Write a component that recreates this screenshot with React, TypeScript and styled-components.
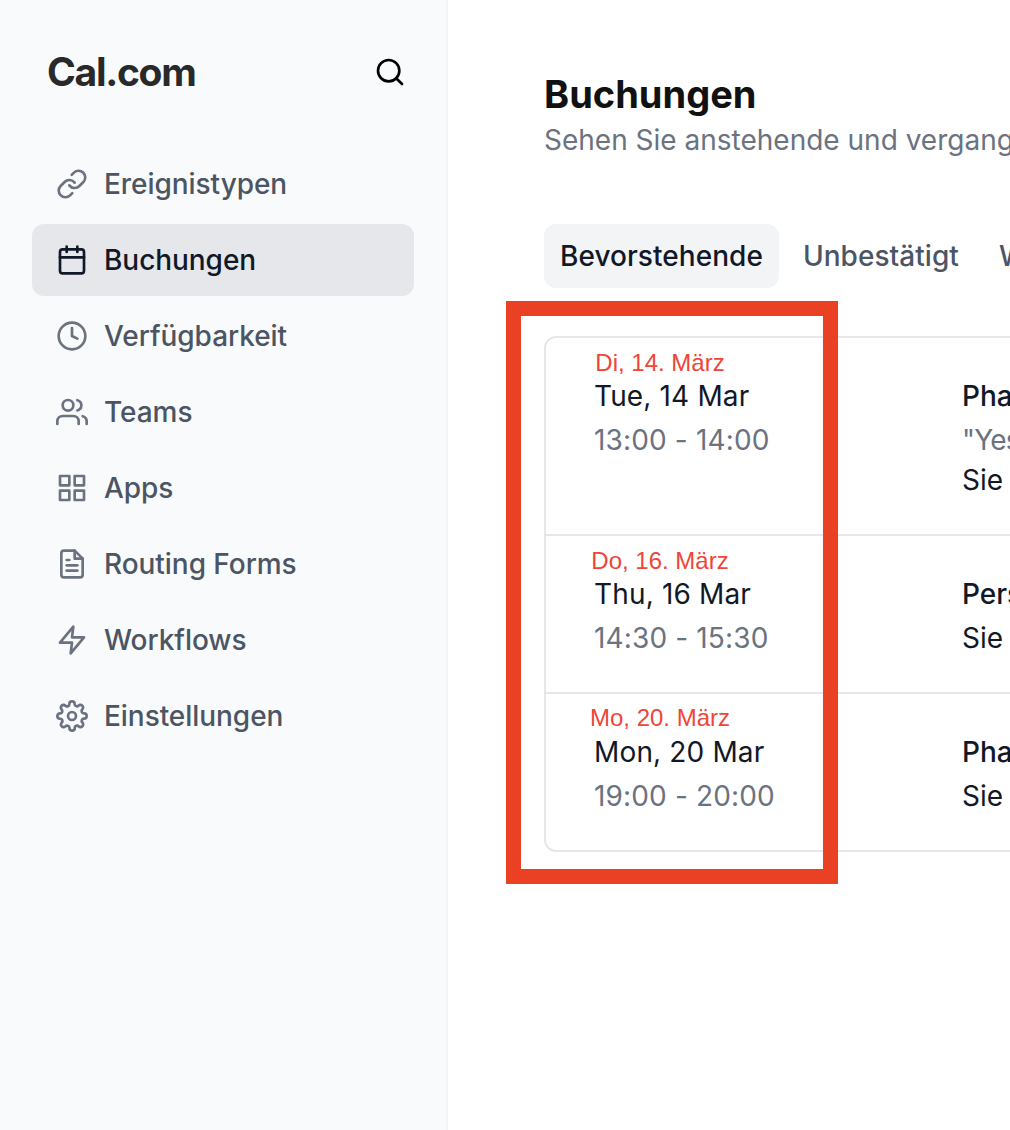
import React from "react";
import styled, { createGlobalStyle } from "styled-components";
import { FiLink, FiCalendar, FiClock, FiUsers, FiGrid, FiFileText, FiZap, FiSettings, FiSearch } from "react-icons/fi";

const Global = createGlobalStyle`
  html, body { margin: 0; padding: 0; background: #fff; }
  body { font-family: Inter, "Liberation Sans", sans-serif; overflow: hidden; }
`;

const Page = styled.div`
  display: flex;
  width: 1010px;
  height: 1130px;
  overflow: hidden;
  position: relative;
`;

const Sidebar = styled.aside`
  flex: 0 0 448px;
  box-sizing: border-box;
  height: 100%;
  background: #f9fafb;
  border-right: 2px solid #f3f4f6;
  padding: 48px 32px 0;
`;

const Brand = styled.div`
  display: flex;
  align-items: center;
  justify-content: space-between;
  height: 48px;
  padding: 0 8px 0 15px;
  margin-bottom: 52px;
  color: #000;
`;

const Logo = styled.span`
  font-size: 39px;
  line-height: 46px;
  font-weight: 700;
  letter-spacing: -1.3px;
  color: #292929;
`;

const Nav = styled.nav`
  display: flex;
  flex-direction: column;
  gap: 4px;
`;

const NavItem = styled.a<{ $active?: boolean }>`
  display: flex;
  align-items: center;
  gap: 16px;
  height: 72px;
  padding: 0 24px;
  border-radius: 12px;
  font-size: 28px;
  font-weight: 500;
  letter-spacing: -0.05px;
  color: ${(p) => (p.$active ? "#111827" : "#4b5563")};
  background: ${(p) => (p.$active ? "#e5e7eb" : "transparent")};
  svg { color: ${(p) => (p.$active ? "#111827" : "#6b7280")}; flex: none; }
`;

const Main = styled.main`
  flex: 1;
  min-width: 0;
  padding: 67px 0 0 96px;
  overflow: hidden;
`;

const Title = styled.h1`
  margin: 0;
  font-size: 38px;
  line-height: 54px;
  font-weight: 700;
  color: #111111;
  white-space: nowrap;
`;

const Subtitle = styled.p`
  margin: 1px 0 0;
  font-size: 28px;
  line-height: 36px;
  color: #6b7280;
  white-space: nowrap;
`;

const Tabs = styled.div`
  display: flex;
  gap: 8px;
  margin-top: 66px;
  width: 900px;
`;

const Tab = styled.span<{ $active?: boolean }>`
  display: flex;
  align-items: center;
  height: 64px;
  padding: 0 16px;
  border-radius: 12px;
  font-size: 28px;
  font-weight: 500;
  letter-spacing: 0.05px;
  white-space: nowrap;
  color: ${(p) => (p.$active ? "#111827" : "#4b5563")};
  background: ${(p) => (p.$active ? "#f3f4f6" : "transparent")};
`;

const Card = styled.section`
  margin-top: 48px;
  width: 900px;
  border: 2px solid #e5e7eb;
  border-radius: 12px;
`;

const Row = styled.div`
  position: relative;
  display: flex;
  padding: 38px 0 34px 48px;
  & + & { border-top: 2px solid #e5e7eb; }
`;

const DateCol = styled.div`
  flex: 0 0 368px;
`;

const DateLine = styled.div`
  font-size: 28px;
  line-height: 40px;
  font-weight: 400;
  letter-spacing: 0.15px;
  color: #111827;
  margin-bottom: 4px;
`;

const TimeLine = styled.div`
  font-size: 28px;
  line-height: 40px;
  letter-spacing: 0.15px;
  color: #6b7280;
`;

const Detail = styled.div`
  white-space: nowrap;
`;

const EventTitle = styled.div`
  font-size: 28px;
  line-height: 40px;
  font-weight: 500;
  color: #111827;
  margin-bottom: 4px;
`;

const Quote = styled.div`
  font-size: 28px;
  line-height: 40px;
  letter-spacing: -0.8px;
  color: #6b7280;
`;

const Who = styled.div`
  font-size: 28px;
  line-height: 40px;
  color: #111827;
`;

/* Red translation note laid over the row, centred on the date column. */
const Note = styled.span<{ $top: number }>`
  position: absolute;
  left: 114px;
  top: ${(p) => p.$top}px;
  transform: translateX(-50%);
  font-family: "Liberation Sans", Arial, sans-serif;
  font-size: 24px;
  line-height: 28px;
  color: #ee4637;
  white-space: nowrap;
`;

/* Annotation frame laid over the screenshot. */
const Frame = styled.div`
  position: absolute;
  left: 506px;
  top: 301px;
  width: 332px;
  height: 583px;
  box-sizing: border-box;
  border: 15px solid #ea4125;
  pointer-events: none;
`;

const items = [
  { label: "Ereignistypen", Icon: FiLink },
  { label: "Buchungen", Icon: FiCalendar, active: true },
  { label: "Verfügbarkeit", Icon: FiClock },
  { label: "Teams", Icon: FiUsers },
  { label: "Apps", Icon: FiGrid },
  { label: "Routing Forms", Icon: FiFileText },
  { label: "Workflows", Icon: FiZap },
  { label: "Einstellungen", Icon: FiSettings },
];

const rows = [
  { note: "Di, 14. März", noteTop: 11, date: "Tue, 14 Mar", time: "13:00 - 14:00", title: "Phantom Call", quote: "\"Yes, please\"" },
  { note: "Do, 16. März", noteTop: 11, date: "Thu, 16 Mar", time: "14:30 - 15:30", title: "Personal Call" },
  { note: "Mo, 20. März", noteTop: 10, date: "Mon, 20 Mar", time: "19:00 - 20:00", title: "Phantom Call" },
];

export default function App() {
  return (
    <Page>
      <Global />
      <Sidebar>
        <Brand>
          <Logo>Cal.com</Logo>
          <FiSearch size={32} />
        </Brand>
        <Nav>
          {items.map(({ label, Icon, active }) => (
            <NavItem key={label} $active={active}>
              <Icon size={32} />
              {label}
            </NavItem>
          ))}
        </Nav>
      </Sidebar>
      <Main>
        <Title>Buchungen</Title>
        <Subtitle>Sehen Sie anstehende und vergangene Buchungen</Subtitle>
        <Tabs>
          <Tab $active>Bevorstehende</Tab>
          <Tab>Unbestätigt</Tab>
          <Tab>Wiederkehrend</Tab>
        </Tabs>
        <Card>
          {rows.map((r) => (
            <Row key={r.date}>
              <Note $top={r.noteTop}>{r.note}</Note>
              <DateCol>
                <DateLine>{r.date}</DateLine>
                <TimeLine>{r.time}</TimeLine>
              </DateCol>
              <Detail>
                <EventTitle>{r.title}</EventTitle>
                {r.quote && <Quote>{r.quote}</Quote>}
                <Who>Sie und Gast</Who>
              </Detail>
            </Row>
          ))}
        </Card>
      </Main>
      <Frame />
    </Page>
  );
}
